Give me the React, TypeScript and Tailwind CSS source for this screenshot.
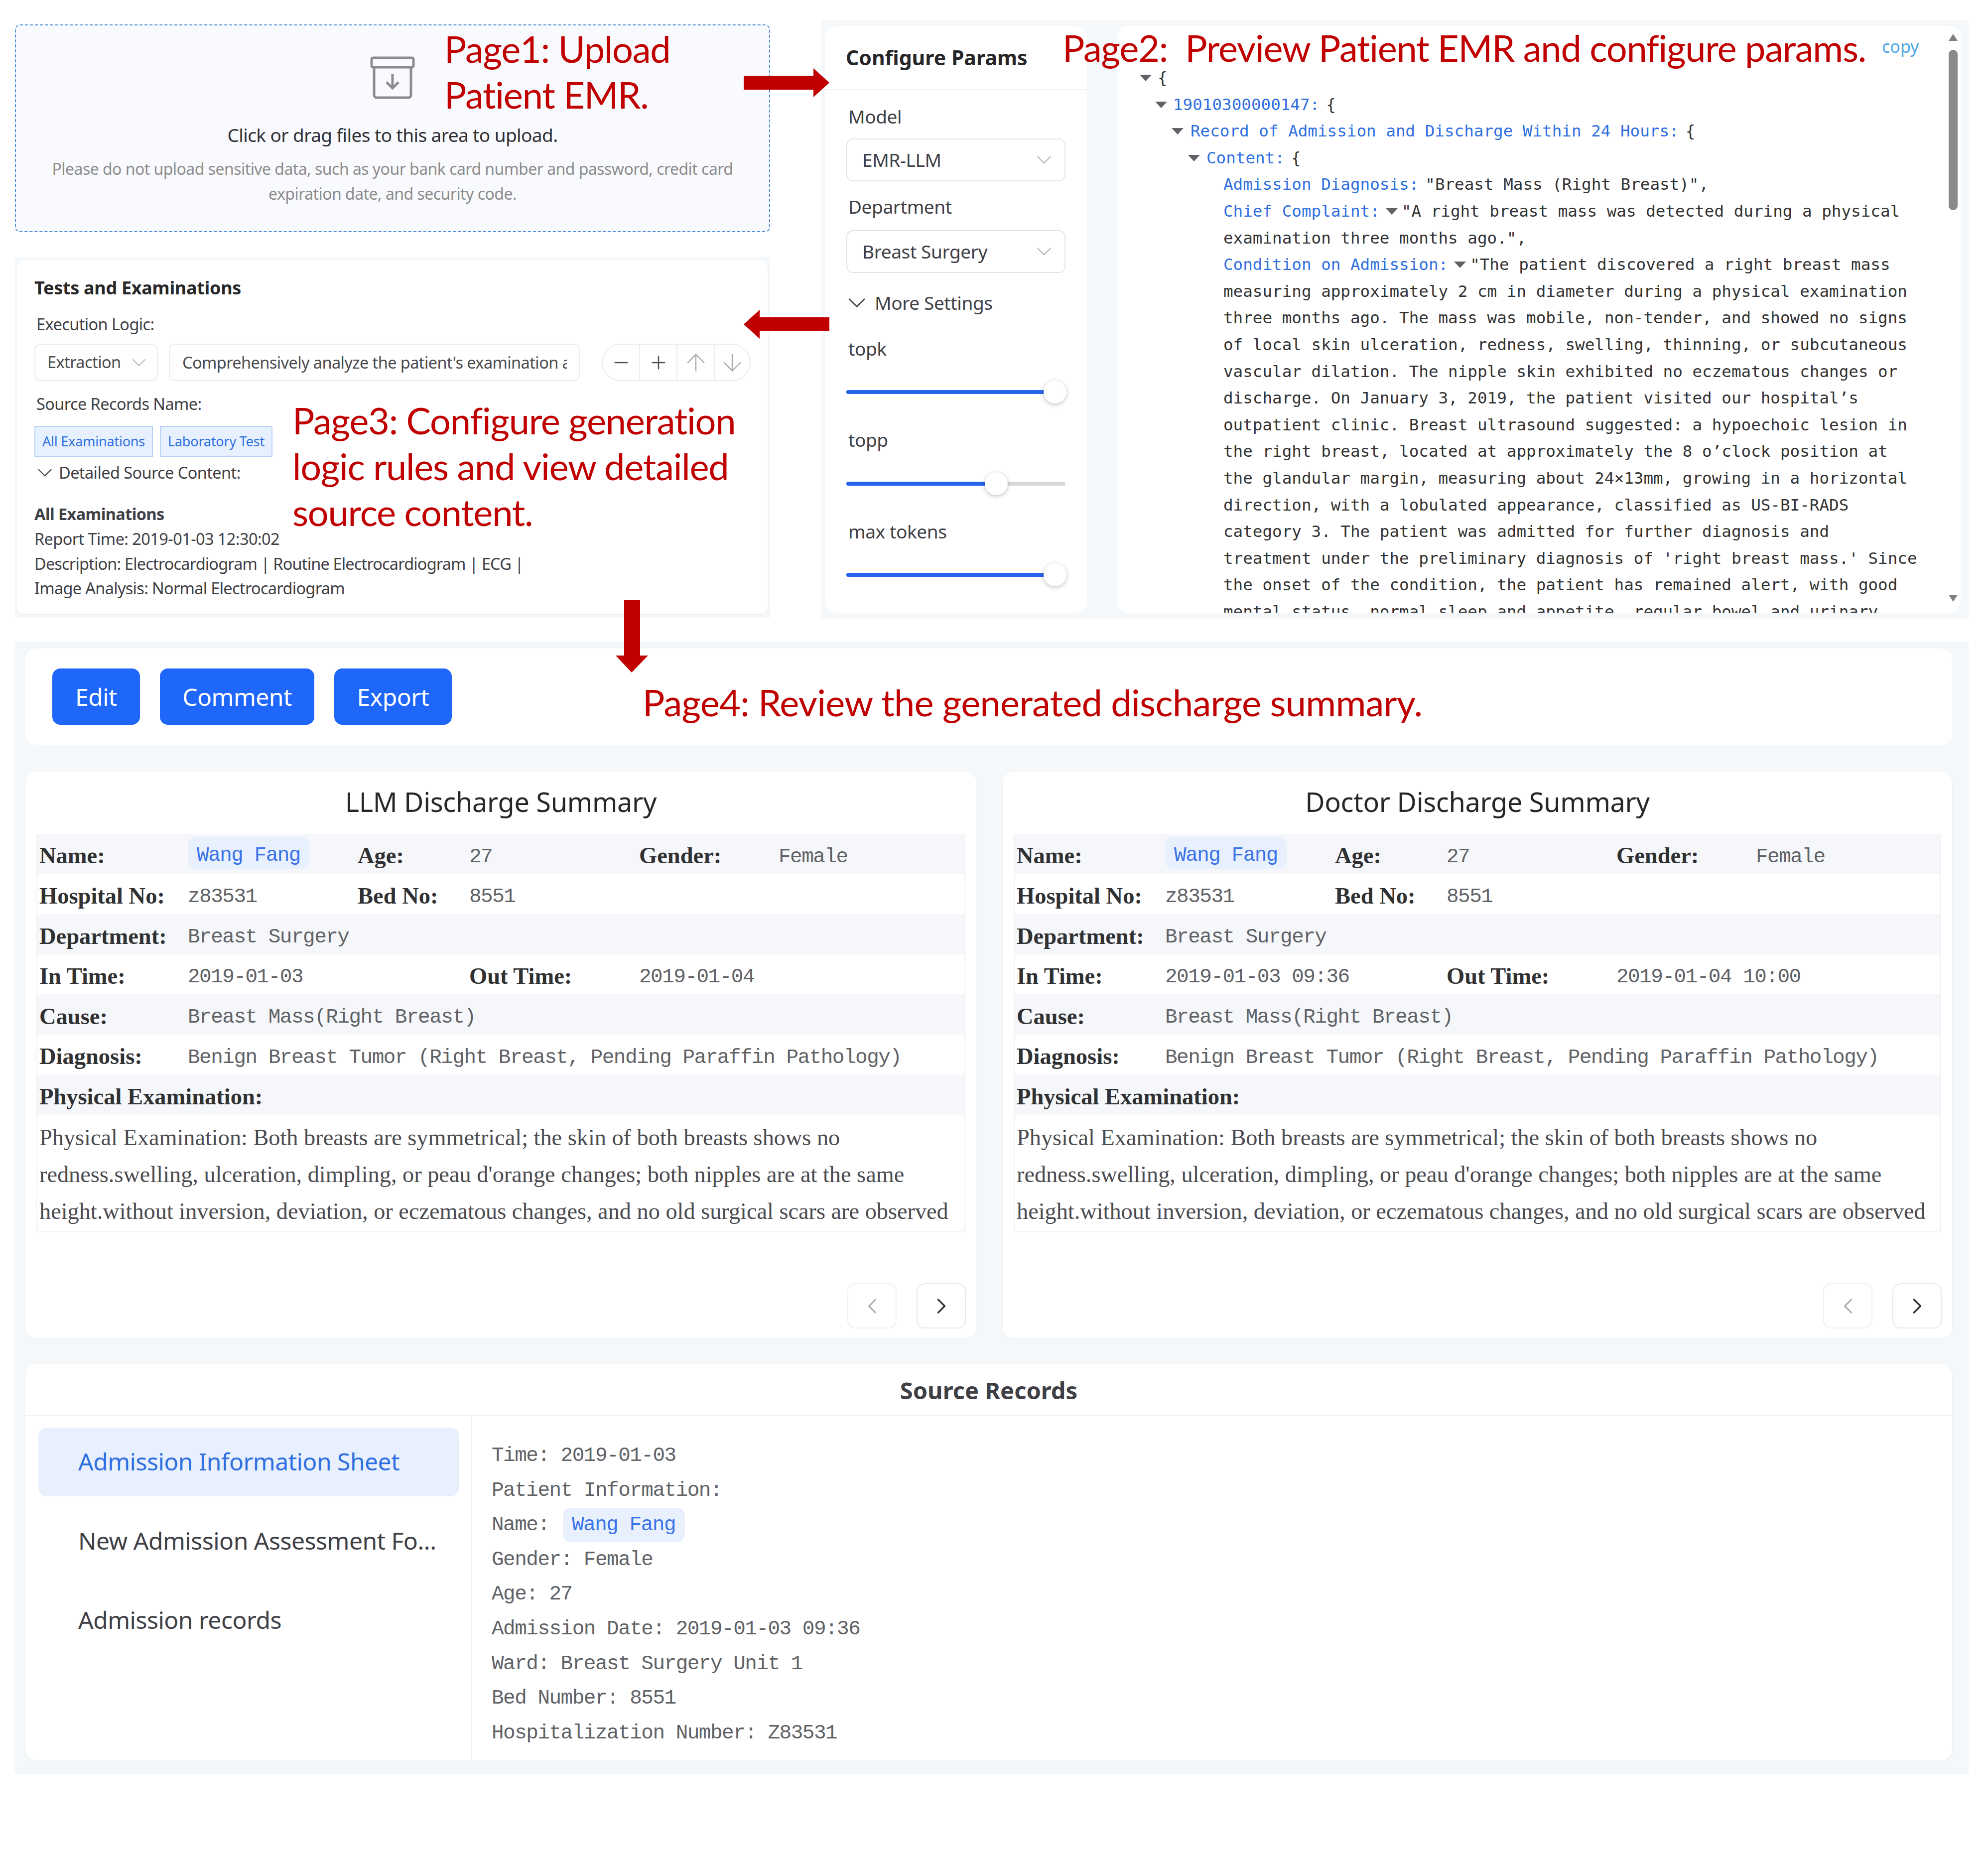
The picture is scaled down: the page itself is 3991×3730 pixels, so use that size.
import { ArrowDown, ArrowUp, ChevronDown, ChevronLeft, ChevronRight, Minus, Plus } from 'lucide-react'

const sans = "font-['Noto_Sans',sans-serif]"
const mono = "font-['Liberation_Mono',monospace] tracking-[-1.5px]"
const serif = "font-['Liberation_Serif',serif]"

const jsonText = [
  'examination three months ago.",',
  null,
  'measuring approximately 2 cm in diameter during a physical examination',
  'three months ago. The mass was mobile, non-tender, and showed no signs',
  'of local skin ulceration, redness, swelling, thinning, or subcutaneous',
  'vascular dilation. The nipple skin exhibited no eczematous changes or',
  'discharge. On January 3, 2019, the patient visited our hospital’s',
  'outpatient clinic. Breast ultrasound suggested: a hypoechoic lesion in',
  'the right breast, located at approximately the 8 o’clock position at',
  'the glandular margin, measuring about 24×13mm, growing in a horizontal',
  'direction, with a lobulated appearance, classified as US-BI-RADS',
  'category 3. The patient was admitted for further diagnosis and',
  "treatment under the preliminary diagnosis of 'right breast mass.' Since",
  'the onset of the condition, the patient has remained alert, with good',
  'mental status, normal sleep and appetite, regular bowel and urinary'
]

const sourceLines = [
  'Time: 2019-01-03',
  'Patient Information:',
  'Name:',
  'Gender: Female',
  'Age: 27',
  'Admission Date: 2019-01-03 09:36',
  'Ward: Breast Surgery Unit 1',
  'Bed Number: 8551',
  'Hospitalization Number: Z83531'
]

function Caret({ className = '' }: { className?: string }) {
  return (
    <svg viewBox="0 0 24 13" className={`h-[13px] w-[24px] shrink-0 ${className}`}>
      <polygon points="0,0 24,0 12,13" fill="#5f6368" />
    </svg>
  )
}

function Arrow({ dir, className }: { dir: 'left' | 'right' | 'down'; className: string }) {
  if (dir === 'down') {
    return (
      <svg viewBox="0 0 65 145" className={className}>
        <polygon points="17,0 49,0 49,111 65,111 32,145 0,111 17,111" fill="#c00000" />
      </svg>
    )
  }
  return (
    <svg viewBox="0 0 172 58" className={className}>
      <polygon
        points={dir === 'right' ? '0,15 140,15 140,0 172,29 140,58 140,43 0,43' : '172,15 32,15 32,0 0,29 32,58 32,43 172,43'}
        fill="#c00000"
      />
    </svg>
  )
}

function Select({ label }: { label: string }) {
  return (
    <div className="flex h-[86px] w-[440px] items-center justify-between rounded-[14px] border-2 border-[#e4e4e7] pl-[30px] pr-[16px] text-[37px] tracking-[-0.4px] text-[#3f3f46]">
      {label}
      <ChevronDown className="h-[50px] w-[50px] text-[#b4b4b8]" strokeWidth={1.1} />
    </div>
  )
}

function Slider({ label, value }: { label: string; value: number }) {
  return (
    <div className="h-[183.5px]">
      <div className="ml-[4px] flex h-[50px] items-center text-[37px] leading-none tracking-[-0.4px] text-[#3f3f46]">{label}</div>
      <div className="relative mt-[59px] h-[8px] w-[440px] rounded-full bg-[#d9d9d9]">
        <div className="h-[8px] rounded-full bg-[#2563eb]" style={{ width: `${value}%` }} />
        <div
          className="absolute top-[-19px] h-[46px] w-[46px] rounded-full bg-white shadow-[0_2px_8px_rgba(0,0,0,0.25)]"
          style={{ left: `calc(${value}% - 4px)` }}
        />
      </div>
    </div>
  )
}

function Chip({ className = '' }: { className?: string }) {
  return (
    <span className={`inline-flex items-center justify-center rounded-[16px] bg-[#e8f0fe] text-[#3b73e8] ${className}`}>Wang Fang</span>
  )
}

function SummaryCard({ title, inTime, outTime, className }: { title: string; inTime: string; outTime: string; className: string }) {
  const label = `${serif} pt-[8px] text-[46.5px] font-bold text-[#303133]`
  const val = `${mono} pt-[12px] text-[41px] text-[#606266]`
  const row = 'col-span-6 grid h-[80.6px] grid-cols-subgrid items-center'
  return (
    <div className={`flex h-[1138px] flex-col rounded-[22px] bg-white px-[22px] shadow-[0_1px_4px_rgba(0,0,0,0.04)] ${className}`}>
      <div className={`${sans} flex h-[122px] items-center justify-center pb-[2px] text-[54px] tracking-[-0.3px] text-[#27272a]`}>{title}</div>
      <div className="mt-[3px] grid grid-cols-[298px_341px_224px_341px_280px_1fr] border-b-2 border-x-2 border-[#f0f2f5] pl-[4px]">
        <div className={`${row} -ml-[4px] pl-[4px] bg-[#f5f7fa]`}>
          <span className={label}>Name:</span>
          <span className={`${val} !pt-0`}>
            <Chip className="h-[64px] w-[244px] pt-[10px]" />
          </span>
          <span className={label}>Age:</span>
          <span className={val}>27</span>
          <span className={label}>Gender:</span>
          <span className={val}>Female</span>
        </div>
        <div className={row}>
          <span className={label}>Hospital No:</span>
          <span className={val}>z83531</span>
          <span className={label}>Bed No:</span>
          <span className={`${val} col-span-3`}>8551</span>
        </div>
        <div className={`${row} -ml-[4px] pl-[4px] bg-[#f5f7fa]`}>
          <span className={label}>Department:</span>
          <span className={`${val} col-span-5`}>Breast Surgery</span>
        </div>
        <div className={row}>
          <span className={label}>In Time:</span>
          <span className={`${val} col-span-2`}>{inTime}</span>
          <span className={label}>Out Time:</span>
          <span className={`${val} col-span-2`}>{outTime}</span>
        </div>
        <div className={`${row} -ml-[4px] pl-[4px] bg-[#f5f7fa]`}>
          <span className={label}>Cause:</span>
          <span className={`${val} col-span-5`}>Breast Mass(Right Breast)</span>
        </div>
        <div className={row}>
          <span className={label}>Diagnosis:</span>
          <span className={`${val} col-span-5 whitespace-pre`}>Benign Breast Tumor (Right Breast, Pending Paraffin Pathology)</span>
        </div>
        <div className={`${row} -ml-[4px] pl-[4px] bg-[#f5f7fa]`}>
          <span className={`${label} col-span-6`}>Physical Examination:</span>
        </div>
        <div className={`${serif} col-span-6 h-[234px] whitespace-nowrap pt-[9px] text-[46.3px] leading-[74px] text-[#4b4b50]`}>
          <div>Physical Examination: Both breasts are symmetrical; the skin of both breasts shows no</div>
          <div>redness.swelling, ulceration, dimpling, or peau d'orange changes; both nipples are at the same</div>
          <div>height.without inversion, deviation, or eczematous changes, and no old surgical scars are observed</div>
        </div>
      </div>
      <div className="mr-[-1px] mt-[102px] flex justify-end gap-[40px]">
        <div className="flex h-[91px] w-[99px] items-center justify-center rounded-[16px] border-2 border-[#f0f0f0]">
          <ChevronLeft className="h-[52px] w-[52px] text-[#a8a8a8]" strokeWidth={1.4} />
        </div>
        <div className="flex h-[91px] w-[99px] items-center justify-center rounded-[16px] border-2 border-[#e8e8e8]">
          <ChevronRight className="h-[52px] w-[52px] text-[#333333]" strokeWidth={1.6} />
        </div>
      </div>
    </div>
  )
}

function JsonKey({ children }: { children: string }) {
  return <span className="text-[#2f6fe0]">{children}</span>
}

export default function App() {
  const redText = "absolute font-['Lato',sans-serif] text-[74px] leading-[92px] text-[#c00000] whitespace-nowrap"
  const brace = 'ml-[13px]'
  return (
    <div className={`${sans} relative h-[3730px] w-[3991px] overflow-hidden bg-white pt-[40px]`}>
      <div className="flex h-[1202px]">
        <div className="ml-[29px] w-[1517px]">
          {/* page 1 */}
          <div className="ml-[1px] mt-[9px] flex h-[417px] flex-col items-center rounded-[10px] border-2 border-dashed border-[#4d8fd6] bg-[#f9fafe]">
            <svg viewBox="0 0 90 86" className="mt-[62px] h-[86px] w-[90px]" fill="none" stroke="#8c8c8c" strokeWidth="5">
              <rect x="3" y="3" width="84" height="19" rx="3" />
              <path d="M8 22v56a5 5 0 0 0 5 5h64a5 5 0 0 0 5-5V22" />
              <path d="M45 36v28M33 52l12 12 12-12" />
            </svg>
            <div className="mt-[47px] text-[37px] leading-[50px] tracking-[-0.6px] text-[#303034]">Click or drag files to this area to upload.</div>
            <div className="mt-[18px] w-[1420px] text-center text-[32px] leading-[50px] tracking-[-0.55px] text-[#8c8c8c]">
              Please do not upload sensitive data, such as your bank card number and password, credit card expiration date, and security code.
            </div>
          </div>
          {/* page 3 */}
          <div className="mt-[50px] h-[725px] bg-[#f5f8fb] px-[5px] py-[7px]">
            <div className="h-[710px] rounded-[14px] bg-white pl-[35px] text-[32.5px] tracking-[-0.6px] shadow-[0_1px_3px_rgba(0,0,0,0.05)]">
              <div className="pt-[30px] text-[36px] font-bold leading-[50px] tracking-[-0.3px] text-[#27272a]">Tests and Examinations</div>
              <div className="ml-[4px] mt-[23px] leading-[50px] text-[#3f3f46]">Execution Logic:</div>
              <div className="mt-[14px] flex h-[75px] text-[#4b4b50]">
                <div className="flex w-[248px] items-center justify-between rounded-[12px] border-2 border-[#ececec] pl-[24px] pr-[12px]">
                  Extraction
                  <ChevronDown className="h-[48px] w-[48px] text-[#b4b4b8]" strokeWidth={1} />
                </div>
                <div className="ml-[22px] w-[825px] rounded-[12px] border-2 border-[#ececec] pl-[25px] pr-[24px]">
                  <div className="overflow-hidden whitespace-nowrap leading-[71px]">Comprehensively analyze the patient's examination and test results</div>
                </div>
                <div className="ml-[44px] flex w-[299px] overflow-hidden rounded-full border-2 border-[#ececec]">
                  <div className="flex w-[75px] items-center justify-center border-r-2 border-[#ececec]">
                    <Minus className="h-[42px] w-[42px] text-[#4b4b50]" strokeWidth={1.4} />
                  </div>
                  <div className="flex w-[75px] items-center justify-center border-r-2 border-[#ececec]">
                    <Plus className="h-[42px] w-[42px] text-[#4b4b50]" strokeWidth={1.4} />
                  </div>
                  <div className="flex w-[75px] items-center justify-center border-r-2 border-[#ececec]">
                    <ArrowUp className="h-[56px] w-[56px] text-[#a8a8ac]" strokeWidth={1} />
                  </div>
                  <div className="flex flex-1 items-center justify-center">
                    <ArrowDown className="h-[56px] w-[56px] text-[#a8a8ac]" strokeWidth={1} />
                  </div>
                </div>
              </div>
              <div className="ml-[4px] mt-[21px] leading-[50px] text-[#3f3f46]">Source Records Name:</div>
              <div className="mt-[19px] flex h-[62px] gap-[14px] text-[27px] tracking-[-0.2px]">
                <div className="flex w-[238px] items-center justify-center border-2 border-[#b9d2fa] bg-[#e6f0fe] text-[#2f6fe0]">All Examinations</div>
                <div className="flex w-[226px] items-center justify-center border-2 border-[#b9d2fa] bg-[#e6f0fe] text-[#2f6fe0]">Laboratory Test</div>
              </div>
              <div className="-ml-[4px] mt-[7px] flex h-[50px] items-center text-[#3f3f46]">
                <ChevronDown className="mr-[3px] h-[50px] w-[50px]" strokeWidth={1} />
                Detailed Source Content:
              </div>
              <div className="mt-[33px] font-bold leading-[50px] text-[#3f3f46]">All Examinations</div>
              <div className="leading-[49.5px] text-[#3f3f46]">
                <div>Report Time: 2019-01-03 12:30:02</div>
                <div className="tracking-[-0.85px]">Description: Electrocardiogram | Routine Electrocardiogram | ECG |</div>
                <div className="tracking-[-0.7px]">Image Analysis: Normal Electrocardiogram</div>
              </div>
            </div>
          </div>
        </div>
        {/* page 2 */}
        <div className="ml-[103px] flex h-[1202px] w-[2303px] bg-[#f5f8fb] px-[8px] py-[12px]">
          <div className="h-[1178px] w-[525px] rounded-[22px] bg-white">
            <div className="flex h-[129px] items-center border-b-2 border-[#f2f2f2] pl-[41px] text-[41px] font-bold text-[#27272a]">Configure Params</div>
            <div className="pl-[42px] text-[37px] tracking-[-0.4px] text-[#3f3f46]">
              <div className="ml-[4px] flex h-[97px] items-center pt-[8px]">Model</div>
              <Select label="EMR-LLM" />
              <div className="ml-[4px] flex h-[98px] items-center pt-[4px]">Department</div>
              <Select label="Breast Surgery" />
              <div className="-ml-[9px] flex h-[120px] items-center">
                <ChevronDown className="mr-[6px] h-[60px] w-[60px]" strokeWidth={1} />
                More Settings
              </div>
              <div className="mt-[6px]">
                <Slider label="topk" value={91} />
                <Slider label="topp" value={64} />
                <Slider label="max tokens" value={91} />
              </div>
            </div>
          </div>
          <div className="relative ml-[60px] h-[1178px] w-[1694px] overflow-hidden rounded-[22px] bg-white">
            <div className="absolute left-[1536px] top-[21px] text-[34px] leading-[40px] text-[#4ea6e8]">copy</div>
            <div className="absolute bottom-0 right-0 top-0 flex w-[28px] flex-col items-center pr-[2px] pt-[16px]">
              <svg viewBox="0 0 18 14" className="h-[14px] w-[18px]"><polygon points="9,0 18,14 0,14" fill="#7f7f7f" /></svg>
              <div className="mt-[18px] h-[322px] w-[18px] rounded-full bg-[#8a8a8a]" />
              <svg viewBox="0 0 18 14" className="mt-[772px] h-[14px] w-[18px]"><polygon points="0,0 18,0 9,14" fill="#7f7f7f" /></svg>
            </div>
            <div className="pt-[78px] font-['DejaVu_Sans_Mono',monospace] text-[32.6px] leading-[53.6px] whitespace-pre text-[#333333]">
              <div className="flex items-center pl-[46px]"><Caret className="mr-[12px]" />{'{'}</div>
              <div className="flex items-center pl-[77px]"><Caret className="mr-[12px]" /><JsonKey>19010300000147:</JsonKey><span className={brace}>{'{'}</span></div>
              <div className="flex items-center pl-[110px]"><Caret className="mr-[14px]" /><JsonKey>Record of Admission and Discharge Within 24 Hours:</JsonKey><span className={brace}>{'{'}</span></div>
              <div className="flex items-center pl-[143px]"><Caret className="mr-[13px]" /><JsonKey>Content:</JsonKey><span className={brace}>{'{'}</span></div>
              <div className="flex items-center pl-[214px]"><JsonKey>Admission Diagnosis:</JsonKey><span className={brace}>"Breast Mass (Right Breast)",</span></div>
              <div className="flex items-center pl-[214px]"><JsonKey>Chief Complaint:</JsonKey><Caret className="ml-[12px] mr-[8px]" />"A right breast mass was detected during a physical</div>
              {jsonText.map((line, i) =>
                line === null ? (
                  <div key={i} className="flex items-center pl-[214px]"><JsonKey>Condition on Admission:</JsonKey><Caret className="ml-[12px] mr-[8px]" />"The patient discovered a right breast mass</div>
                ) : (
                  <div key={i} className="pl-[214px]">{line}</div>
                )
              )}
            </div>
          </div>
        </div>
      </div>
      {/* page 4 */}
      <div className="ml-[28px] mt-[46px] h-[2274px] w-[3924px] bg-[#f5f8fb] pl-[23px] pt-[14px]">
        <div className="flex h-[193px] w-[3868px] gap-[40px] rounded-[22px] bg-white pl-[54px] pt-[40px] text-[48px] tracking-[-0.5px] text-white">
          <div className="flex h-[113px] w-[176px] items-center justify-center rounded-[16px] bg-[#1f66fa]">Edit</div>
          <div className="flex h-[113px] w-[310px] items-center justify-center rounded-[16px] bg-[#1f66fa]">Comment</div>
          <div className="flex h-[113px] w-[236px] items-center justify-center rounded-[16px] bg-[#1f66fa]">Export</div>
        </div>
        <div className="mt-[54px] flex w-[3868px] gap-[53px]">
          <SummaryCard className="w-[1909px]" title="LLM Discharge Summary" inTime="2019-01-03" outTime="2019-01-04" />
          <SummaryCard className="w-[1906px]" title="Doctor Discharge Summary" inTime="2019-01-03 09:36" outTime="2019-01-04 10:00" />
        </div>
        <div className="mt-[51px] h-[796px] w-[3868px] rounded-[22px] bg-white shadow-[0_1px_4px_rgba(0,0,0,0.04)]">
          <div className="flex h-[105px] items-center justify-center border-b-2 border-[#f0f2f5] pt-[3px] text-[47px] font-bold text-[#3f3f46]">Source Records</div>
          <div className="flex h-[691px]">
            <div className="w-[897px] border-r-2 border-[#f0f2f5] pl-[26px] pr-[24px] pt-[23px] text-[48px] tracking-[-0.5px] text-[#3f3f46]">
              <div className="flex h-[138px] items-center rounded-[18px] bg-[#e8effd] pb-[3px] pl-[80px] text-[#2f6fe0]">Admission Information Sheet</div>
              <div className="mt-[21px] flex h-[138px] items-center whitespace-nowrap pb-[3px] pl-[80px]">New Admission Assessment Fo...</div>
              <div className="mt-[21px] flex h-[138px] items-center pb-[3px] pl-[80px]">Admission records</div>
            </div>
            <div className={`${mono} pl-[39px] pt-[45px] text-[41px] leading-[69.6px] text-[#606266]`}>
              {sourceLines.map((line) =>
                line === 'Name:' ? (
                  <div key={line} className="flex items-center">
                    {line}
                    <Chip className="ml-[27px] h-[69px] w-[245px]" />
                  </div>
                ) : (
                  <div key={line}>{line}</div>
                )
              )}
            </div>
          </div>
        </div>
      </div>
      {/* annotations over the screenshots */}
      <div className={`${redText} left-[892px] top-[52px] tracking-[-1.25px]`}>Page1: Upload<br />Patient EMR.</div>
      <div className={`${redText} left-[2133px] top-[50px] whitespace-pre tracking-[-1.25px]`}>Page2:  Preview Patient EMR and configure params.</div>
      <div className={`${redText} left-[587px] top-[798px] tracking-[-1.25px]`}>Page3: Configure generation<br />logic rules and view detailed<br />source content.</div>
      <div className={`${redText} left-[1290px] top-[1364px] tracking-[-0.75px]`}>Page4: Review the generated discharge summary.</div>
      <Arrow dir="right" className="absolute left-[1493px] top-[137px] h-[58px] w-[172px]" />
      <Arrow dir="left" className="absolute left-[1493px] top-[622px] h-[58px] w-[172px]" />
      <Arrow dir="down" className="absolute left-[1236px] top-[1205px] h-[145px] w-[65px]" />
    </div>
  )
}
